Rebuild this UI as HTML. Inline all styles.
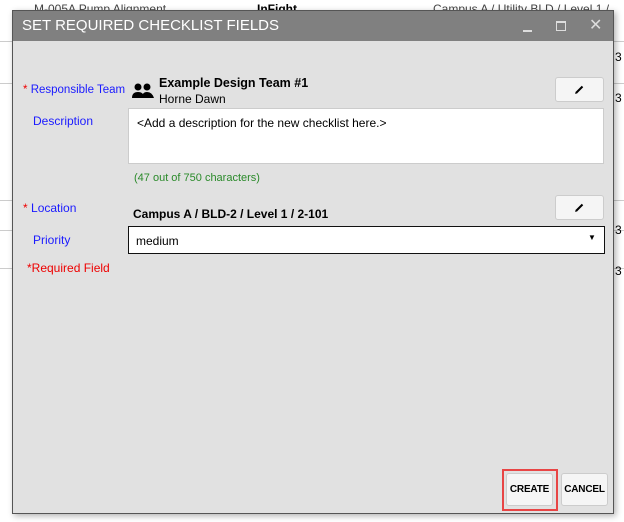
<!DOCTYPE html><html><head><style>
body{margin:0;width:624px;height:522px;background:#fff;position:relative;overflow:hidden;font-family:"Liberation Sans",sans-serif;font-size:12px}
.a{position:absolute}
.line{position:absolute;left:0;width:624px;height:1px;background:#ccc}
.dlg{position:absolute;left:12px;top:10px;width:600px;height:502px;background:#e1e1e1;border:1px solid #555;box-shadow:2px 2px 6px rgba(0,0,0,.3)}
.tb{position:absolute;left:0;top:0;width:600px;height:30px;background:#808080;color:#fff;font-size:15px;line-height:30px}
.lbl{color:#1a1aff}
.star{color:#e00}
.btn{position:absolute;background:#f5f5f5;border:1px solid #ccc;border-radius:3px}
</style></head><body>
<div class="a" style="left:34px;top:2px;color:#444">M-005A Pump Alignment</div>
<div class="a" style="left:257px;top:2px;font-weight:bold">InFight</div>
<div class="a" style="left:433px;top:2px;color:#444">Campus A / Utility BLD / Level 1 /</div>
<div class="line" style="top:41px"></div><div class="line" style="top:83px"></div>
<div class="line" style="top:200px"></div><div class="line" style="top:230px"></div>
<div class="line" style="top:268px"></div>
<div class="a" style="left:615px;top:50px">3</div><div class="a" style="left:615px;top:91px">3</div>
<div class="a" style="left:615px;top:223px">3</div><div class="a" style="left:615px;top:264px">3</div>
<div class="dlg">
<div class="tb"><span style="margin-left:9px">SET REQUIRED CHECKLIST FIELDS</span>
<span class="a" style="left:510px;top:19px;width:9px;height:2px;background:#ddd"></span>
<span class="a" style="left:543px;top:10px;width:8px;height:7px;border:1px solid #ddd;border-top-width:2px"></span>
<span class="a" style="left:576px;top:0;font-size:16px;color:#ddd">✕</span></div>
<div class="a" style="left:10px;top:73px;font-size:11.5px"><span class="star">*</span> <span class="lbl">Responsible Team</span></div>
<svg class="a" style="left:119px;top:70px" width="22" height="18" viewBox="0 0 22 18"><circle cx="6" cy="6" r="3.5"/><circle cx="15" cy="6" r="3.5"/><path d="M0 17q0-6 6-6t6 6zM10 17q0-6 5-6t7 6z"/></svg>
<div class="a" style="left:146px;top:65px;font-weight:bold;font-size:12.5px">Example Design Team #1</div>
<div class="a" style="left:146px;top:81px">Horne Dawn</div>
<div class="btn" style="left:542px;top:66px;width:47px;height:23px"><svg class="a" style="left:19px;top:7px" width="9" height="9" viewBox="0 0 9 9"><path d="M1 8L7.5 1.5" stroke="#000" stroke-width="2"/><path d="M0 9l1-2.5 1.5 1.5z"/></svg></div>
<div class="a lbl" style="left:20px;top:103px">Description</div>
<div class="a" style="left:115px;top:97px;width:474px;height:54px;background:#fff;border:1px solid #ccc"><div style="margin:7px 0 0 8px">&lt;Add a description for the new checklist here.&gt;</div></div>
<div class="a" style="left:121px;top:161px;color:#2a8a2a;font-size:11px">(47 out of 750 characters)</div>
<div class="a" style="left:10px;top:190px"><span class="star">*</span> <span class="lbl">Location</span></div>
<div class="a" style="left:120px;top:196px;font-weight:bold">Campus A / BLD-2 / Level 1 / 2-101</div>
<div class="btn" style="left:542px;top:184px;width:47px;height:23px"><svg class="a" style="left:19px;top:7px" width="9" height="9" viewBox="0 0 9 9"><path d="M1 8L7.5 1.5" stroke="#000" stroke-width="2"/><path d="M0 9l1-2.5 1.5 1.5z"/></svg></div>
<div class="a lbl" style="left:20px;top:222px">Priority</div>
<div class="a" style="left:115px;top:215px;width:475px;height:26px;background:#fff;border:1px solid #111"><span class="a" style="left:7px;top:7px">medium</span><span class="a" style="left:459px;top:6px;font-size:8px">▼</span></div>
<div class="a star" style="left:14px;top:250px">*Required Field</div>
<div class="a" style="left:489px;top:458px;width:52px;height:38px;border:2px solid #e84545"></div>
<div class="btn" style="left:493px;top:462px;width:45px;height:31px;font-weight:bold;font-size:10px;text-align:center;line-height:31px;letter-spacing:-0.2px">CREATE</div>
<div class="btn" style="left:548px;top:462px;width:45px;height:31px;font-weight:bold;font-size:10px;text-align:center;line-height:31px;letter-spacing:-0.2px">CANCEL</div>
</div>
</body></html>
